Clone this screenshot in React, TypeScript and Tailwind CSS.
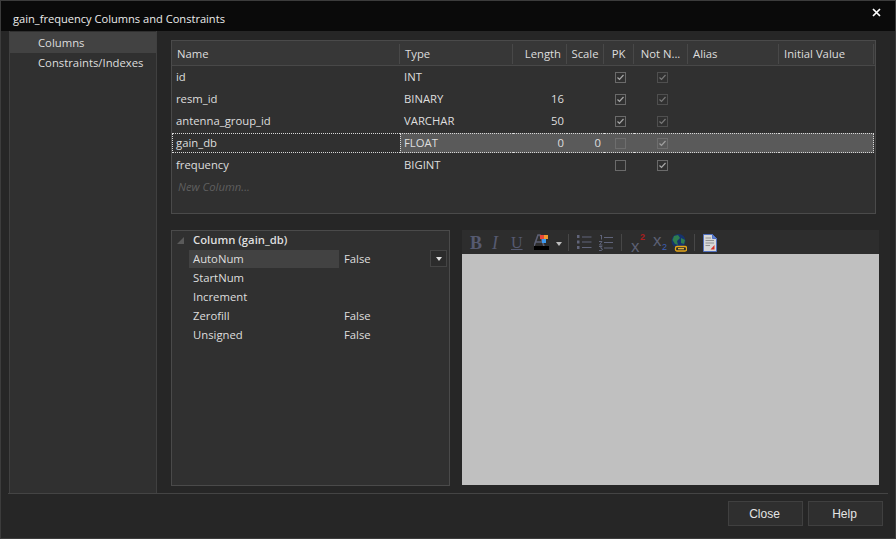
const font = "font-['Open_Sans','Noto_Sans',sans-serif]";

const COLS = "grid grid-cols-[228px_113px_54px_37px_30px_54px_91px_95px]";

function Check({ checked, tone }: { checked: boolean; tone: "on" | "dim" | "off" }) {
  const box = tone === "on" ? "#6a6a6a" : tone === "dim" ? "#4f4f4f" : "#6e6e6e";
  const tick = tone === "on" ? "#a8a8a8" : tone === "dim" ? "#787878" : "#a0a0a0";
  return (
    <svg width="11" height="11" viewBox="0 0 11 11" className="ml-[2px] block">
      <rect x="0.5" y="0.5" width="10" height="10" fill="none" stroke={box} />
      {checked && <path d="M2.5 5.5 L4.5 7.5 L8.5 3" fill="none" stroke={tick} strokeWidth="1.2" />}
    </svg>
  );
}

type Row = {
  name: string;
  type: string;
  len?: string;
  scale?: string;
  pk: boolean;
  pkTone: "on" | "dim" | "off";
  nn: boolean;
  nnTone: "on" | "dim" | "off";
  sel?: boolean;
};

const rows: Row[] = [
  { name: "id", type: "INT", pk: true, pkTone: "on", nn: true, nnTone: "dim" },
  { name: "resm_id", type: "BINARY", len: "16", pk: true, pkTone: "on", nn: true, nnTone: "dim" },
  { name: "antenna_group_id", type: "VARCHAR", len: "50", pk: true, pkTone: "on", nn: true, nnTone: "dim" },
  { name: "gain_db", type: "FLOAT", len: "0", scale: "0", pk: false, pkTone: "off", nn: true, nnTone: "off", sel: true },
  { name: "frequency", type: "BIGINT", pk: false, pkTone: "on", nn: true, nnTone: "on" },
];

function Head({ label, align = "left", last = false }: { label: string; align?: "left" | "right" | "center"; last?: boolean }) {
  const a = align === "right" ? "justify-end pr-[5px]" : align === "center" ? "justify-center" : "justify-start pl-[5px]";
  return (
    <div className={`mt-[3px] flex h-[20px] items-center whitespace-nowrap ${a} ${last ? "" : "border-r border-[#484848]"}`}>
      {label}
    </div>
  );
}

function GridRow({ r }: { r: Row }) {
  const cell = "flex items-center whitespace-nowrap";
  const band = r.sel ? "my-px border-y border-dotted border-[#d8d8d8] bg-[#5a5a5a]" : "";
  return (
    <div className={`${COLS} h-[22px]`}>
      <div className={`${cell} ${r.sel ? "my-px border-y border-l border-dotted border-[#d8d8d8] pl-[3px]" : "pl-[4px]"}`}>{r.name}</div>
      <div className={`${cell} ${r.sel ? "my-px border-y border-l border-dotted border-[#d8d8d8] bg-[#5a5a5a] pl-[3px]" : "pl-[4px]"}`}>{r.type}</div>
      <div className={`${cell} justify-end pr-[3px] ${band}`}>{r.len}</div>
      <div className={`${cell} justify-end pr-[3px] ${band}`}>{r.scale}</div>
      <div className={`${cell} justify-center ${band}`}>
        <Check checked={r.pk} tone={r.pkTone} />
      </div>
      <div className={`${cell} justify-center ${band}`}>
        <Check checked={r.nn} tone={r.nnTone} />
      </div>
      <div className={band} />
      <div className={r.sel ? "my-px border-y border-r border-dotted border-[#d8d8d8] bg-[#5a5a5a]" : ""} />
    </div>
  );
}

function Prop({ name, value, sel }: { name: string; value?: string; sel?: boolean }) {
  return (
    <div className="flex h-[19px] items-center">
      <div className={`ml-[17px] flex h-[18px] w-[150px] items-center pl-[4px] ${sel ? "bg-[#424242]" : ""}`}>{name}</div>
      <div className="ml-[5px] flex-1">{value}</div>
      {sel && (
        <div className="mr-[2px] flex h-[17px] w-[17px] items-center justify-center border border-[#444444] bg-[#2c2c2c]">
          <svg width="6" height="4" viewBox="0 0 6 4"><path d="M0 0H6L3 4Z" fill="#e0e0e0" /></svg>
        </div>
      )}
    </div>
  );
}

function Sep() {
  return <div className="mx-[3px] h-[17px] w-px bg-[#474747]" />;
}

function Toolbar() {
  const serif = "font-['Liberation_Serif',serif] text-[#565a70] leading-none";
  const mark = "font-['Liberation_Sans',sans-serif] leading-none text-[#5c6074]";
  return (
    <div className="flex h-[24px] items-center bg-[#2d2d2d] pl-[7px] pt-px">
      <span className={`${serif} w-[22px] pl-[1px] text-[18px] font-bold`}>B</span>
      <span className={`${serif} w-[20px] pl-[1px] text-[18px] italic`}>I</span>
      <span className={`${serif} w-[23px] text-[16px] underline`}>U</span>
      <svg width="16" height="18" viewBox="0 0 16 18" className="block">
        <path d="M0 12 L4 1 H6 L10 12 M2 8 H8" fill="none" stroke="#5c6074" strokeWidth="1.6" />
        <rect x="6" y="1" width="4" height="4" fill="#e8463a" />
        <rect x="10" y="1" width="4" height="4" fill="#f29a2e" />
        <rect x="8" y="5" width="4" height="4" fill="#3c9af0" />
        <rect x="0" y="12" width="15" height="4" fill="#000" />
      </svg>
      <svg width="6" height="4" viewBox="0 0 6 4" className="ml-[6px] mt-[3px] block"><path d="M0 0H6L3 4Z" fill="#bdbdbd" /></svg>
      <div className="ml-[3px]"><Sep /></div>
      <svg width="15" height="15" viewBox="0 0 15 15" className="ml-[5px] block">
        <path d="M0 1.5h2.5M0 7h2.5M0 12.5h2.5" stroke="#60647a" strokeWidth="3" fill="none" />
        <path d="M5 2h9.5M5 7h9.5M5 12.5h9.5" stroke="#60647a" strokeWidth="1.2" fill="none" />
      </svg>
      <svg width="15" height="16" viewBox="0 0 15 16" className="ml-[6px] block">
        <path d="M2 0.5 L3.5 0 V4.5 M1 6.5 H4 L1.5 10 H4.5 M1 11.5 H4 L2.5 13 L4.5 14 L3.5 15.5 H1" stroke="#60647a" strokeWidth="1" fill="none" />
        <path d="M6 2.5h9M6 7.5h9M6 13h9" stroke="#60647a" strokeWidth="1.2" fill="none" />
      </svg>
      <div className="ml-[5px]"><Sep /></div>
      <span className="relative ml-[6px] block h-[18px] w-[16px]">
        <span className={`${mark} absolute left-0 top-[4px] text-[17px]`}>x</span>
        <span className="absolute left-[9px] top-[-1px] font-['Liberation_Sans',sans-serif] text-[9px] font-bold leading-none text-[#a81e1e]">2</span>
      </span>
      <span className="relative ml-[6px] block h-[18px] w-[16px]">
        <span className={`${mark} absolute left-0 top-[-2px] text-[17px]`}>x</span>
        <span className="absolute left-[9px] top-[9px] font-['Liberation_Sans',sans-serif] text-[9px] leading-none text-[#3c5fb4]">2</span>
      </span>
      <svg width="16" height="18" viewBox="0 0 16 18" className="ml-[2px] block">
        <circle cx="7.5" cy="7" r="7" fill="#16336c" />
        <path d="M3 2 L7 1 L9 4 L6 7 L7 11 L4 10 L1.5 6Z" fill="#2e7d4f" />
        <path d="M10 4 L14 6 L13 10 L10 9Z" fill="#2e7d4f" />
        <rect x="4.5" y="12.5" width="11" height="4.5" rx="1.5" fill="#2d2d2d" stroke="#e8a818" strokeWidth="1.3" />
        <path d="M7 14.7H13" stroke="#f0c040" strokeWidth="1.2" />
      </svg>
      <div className="ml-[4px]"><Sep /></div>
      <svg width="14" height="18" viewBox="0 0 14 18" className="ml-[5px] block">
        <path d="M0.5 0.5H9.5L13.5 4.5V17.5H0.5Z" fill="#d8d8d8" stroke="#5070c0" />
        <path d="M9.5 0.5V4.5H13.5Z" fill="#5a82d8" stroke="#5070c0" />
        <path d="M2.5 4H8M2.5 6.5H11M2.5 9H11M2.5 11.5H7" stroke="#8a8a8a" strokeWidth="0.9" />
        <path d="M7.5 15.5L11.5 11V15.5Z" fill="#d8322a" />
      </svg>
    </div>
  );
}

function Btn({ label }: { label: string }) {
  return (
    <button className="flex h-[25px] w-[75px] items-center justify-center border border-[#404040] bg-[#2f2f2f] pr-[2px] font-['Liberation_Sans',sans-serif] text-[12px] text-[#e4e4e4]">
      {label}
    </button>
  );
}

export default function App() {
  return (
    <div className={`${font} flex h-[539px] w-[896px] flex-col overflow-hidden border border-[#3c3c3c] bg-[#262626] text-[11.3px] leading-none text-[#dedede]`}>
      <div className="flex h-[30px] shrink-0 items-center justify-between bg-[#0a0a0a] pl-[12px] pr-[14px] text-[#ececec]">
        <span className="pt-[6px] text-[11.1px]">gain_frequency Columns and Constraints</span>
        <svg width="9" height="9" viewBox="0 0 9 9" className="mb-[8px] block">
          <path d="M1 1L8 8M8 1L1 8" stroke="#ffffff" strokeWidth="1.7" />
        </svg>
      </div>

      <div className="ml-[7px] mr-[7px] flex h-[463px] shrink-0 border-b border-[#444444]">
        <div className="ml-px w-[148px] shrink-0 border-x border-[#404040] bg-[#303030] pt-px">
          <div className="flex h-[21px] items-center bg-[#424242] pl-[28px]">Columns</div>
          <div className="flex h-[20px] items-center pl-[28px]">Constraints/Indexes</div>
        </div>

        <div className="flex flex-1 flex-col pl-[14px] pt-[9px]">
          <div className="h-[174px] w-[705px] border border-[#4a4a4a] bg-[#303030]">
            <div className={`${COLS} h-[25px] border-b border-[#484848] bg-[#373737]`}>
              <Head label="Name" />
              <Head label="Type" />
              <Head label="Length" align="right" />
              <Head label="Scale" align="center" />
              <Head label="PK" align="center" />
              <Head label="Not N..." align="center" />
              <Head label="Alias" />
              <Head label="Initial Value" />
            </div>
            {rows.map((r) => (
              <GridRow key={r.name} r={r} />
            ))}
            <div className="flex h-[22px] items-center pl-[6px] italic text-[#5f5f5f]">New Column...</div>
          </div>

          <div className="mt-[16px] flex h-[256px] w-[708px] gap-[12px]">
            <div className="h-[256px] w-[279px] shrink-0 border border-[#4a4a4a] bg-[#303030]">
              <div className="flex h-[18px] items-center pl-[5px] font-semibold">
                <svg width="7" height="7" viewBox="0 0 7 7" className="mr-[9px] block"><path d="M7 0V7H0Z" fill="#5a5a5a" /></svg>
                Column (gain_db)
              </div>
              <Prop name="AutoNum" value="False" sel />
              <Prop name="StartNum" />
              <Prop name="Increment" />
              <Prop name="Zerofill" value="False" />
              <Prop name="Unsigned" value="False" />
            </div>
            <div className="flex h-[255px] flex-1 flex-col">
              <Toolbar />
              <div className="flex-1 bg-[#c0c0c0]" />
            </div>
          </div>
        </div>
      </div>

      <div className="flex flex-1 items-start justify-end gap-[5px] pr-[12px] pt-[7px]">
        <Btn label="Close" />
        <Btn label="Help" />
      </div>
    </div>
  );
}
